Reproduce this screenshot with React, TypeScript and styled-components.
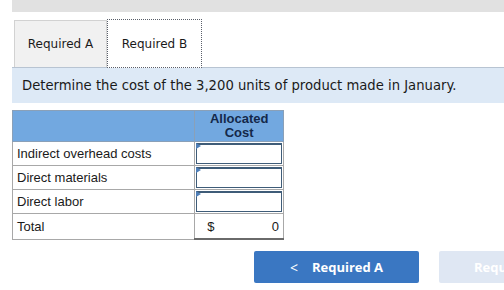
import styled, { createGlobalStyle } from 'styled-components'

const GlobalStyle = createGlobalStyle`
  html, body {
    margin: 0;
    padding: 0;
    background: #ffffff;
  }
  body {
    width: 504px;
    height: 290px;
    overflow: hidden;
  }
`

const Page = styled.div`
  width: 504px;
  height: 290px;
  padding-left: 12px;
  box-sizing: border-box;
  overflow: hidden;
`

const TopBar = styled.div`
  height: 12px;
  background: #e1e1e1;
`

const TabRow = styled.div`
  display: flex;
  align-items: flex-end;
  padding-left: 2px;
  height: 55px;
  box-sizing: border-box;
`

const Tab = styled.div<{ $active?: boolean }>`
  width: ${(p) => (p.$active ? '95px' : '93px')};
  height: ${(p) => (p.$active ? '49px' : '47px')};
  box-sizing: border-box;
  display: flex;
  align-items: center;
  justify-content: center;
  font-family: Verdana, 'DejaVu Sans', sans-serif;
  font-size: 12px;
  color: #1a1a1a;
  background: ${(p) => (p.$active ? '#ffffff' : '#f1f1f1')};
  border: ${(p) => (p.$active ? '1px dotted #5a5f6a' : '1px solid #d2d2d2')};
  border-bottom: ${(p) => (p.$active ? '1px dotted #5a5f6a' : 'none')};
  margin-bottom: ${(p) => (p.$active ? '-1px' : '0')};
  position: relative;
  z-index: ${(p) => (p.$active ? 1 : 0)};
`

const Prompt = styled.div`
  height: 35px;
  background: #dde9f6;
  border-top: 1px solid #b8c4d2;
  display: flex;
  align-items: center;
  padding-left: 10px;
  font-family: Verdana, 'DejaVu Sans', sans-serif;
  font-size: 13.2px;
  color: #1a1a1a;
`

const Table = styled.table`
  margin-top: 7px;
  border-collapse: collapse;
  width: 272px;
  font-family: 'Liberation Sans', Arial, sans-serif;
  font-size: 13px;
  color: #1a1a1a;
`

const HeadCell = styled.th<{ $wide?: boolean }>`
  background: #72a8e0;
  border: 1px solid #8aa0b8;
  height: 30px;
  padding: 0;
  width: ${(p) => (p.$wide ? '183px' : '89px')};
  color: #14284a;
  font-weight: bold;
  font-size: 13px;
  line-height: 14px;
  text-align: center;
`

const LabelCell = styled.td`
  border: 1px solid #a8a8a8;
  padding: 0 4px;
  white-space: nowrap;
`

const InputCell = styled.td`
  border: 1px solid #a8a8a8;
  padding: 1px;
  position: relative;
`

const InputBox = styled.div`
  height: 21px;
  border: 1px solid #3f5c78;
  border-top-width: 2px;
  box-sizing: border-box;
  background: #ffffff;
`

const Marker = styled.span`
  position: absolute;
  left: 1px;
  top: 1px;
  width: 0;
  height: 0;
  border-top: 3px solid transparent;
  border-bottom: 3px solid transparent;
  border-left: 5px solid #4f7fb8;
`

const TotalCell = styled.td`
  border: 1px solid #a8a8a8;
  border-bottom: 2px solid #6a6a6a;
  height: 24px;
  padding: 0 4px 0 12px;
`

const TotalInner = styled.div`
  display: flex;
  justify-content: space-between;
`

const NavRow = styled.div`
  display: flex;
  gap: 20px;
  margin-top: 11px;
  padding-left: 242px;
`

const NavButton = styled.div<{ $disabled?: boolean }>`
  flex: none;
  width: 165px;
  height: 32px;
  box-sizing: border-box;
  border-radius: 2px;
  display: flex;
  align-items: center;
  justify-content: ${(p) => (p.$disabled ? 'flex-start' : 'center')};
  padding-left: ${(p) => (p.$disabled ? '35px' : '0')};
  gap: 14px;
  background: ${(p) => (p.$disabled ? '#dfe7f3' : '#3a77c2')};
  color: #ffffff;
  font-family: 'Open Sans', 'Liberation Sans', sans-serif;
  font-weight: bold;
  font-size: 13px;
`

const Chevron = styled.span`
  font-size: 14px;
  font-weight: normal;
`

const rows = ['Indirect overhead costs', 'Direct materials', 'Direct labor']

export default function App() {
  return (
    <>
      <GlobalStyle />
      <Page>
        <TopBar />
        <TabRow>
          <Tab>Required A</Tab>
          <Tab $active>Required B</Tab>
        </TabRow>
        <Prompt>Determine the cost of the 3,200 units of product made in January.</Prompt>
        <Table>
          <thead>
            <tr>
              <HeadCell $wide />
              <HeadCell>
                Allocated
                <br />
                Cost
              </HeadCell>
            </tr>
          </thead>
          <tbody>
            {rows.map((r) => (
              <tr key={r}>
                <LabelCell>{r}</LabelCell>
                <InputCell>
                  <Marker />
                  <InputBox />
                </InputCell>
              </tr>
            ))}
            <tr>
              <LabelCell>Total</LabelCell>
              <TotalCell>
                <TotalInner>
                  <span>$</span>
                  <span>0</span>
                </TotalInner>
              </TotalCell>
            </tr>
          </tbody>
        </Table>
        <NavRow>
          <NavButton>
            <Chevron>&lt;</Chevron>
            <span>Required A</span>
          </NavButton>
          <NavButton $disabled>Required B</NavButton>
        </NavRow>
      </Page>
    </>
  )
}
